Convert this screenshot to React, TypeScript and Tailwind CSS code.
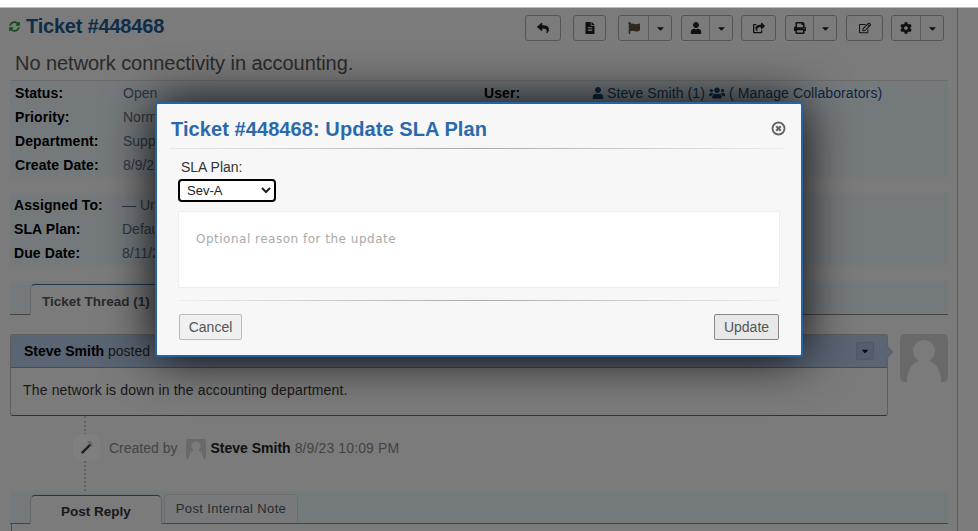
import {
  FaCaretDown,
  FaCog,
  FaFileAlt,
  FaFlag,
  FaPrint,
  FaRegEdit,
  FaReply,
  FaShareSquare,
  FaSyncAlt,
  FaUser,
  FaUsers,
} from 'react-icons/fa';
import type { ReactNode } from 'react';

const Avatar = ({ className }: { className: string }) => (
  <svg viewBox="0 0 48 48" className={className}>
    <rect width="48" height="48" rx="5" fill="#d2d2d2" />
    <circle cx="24" cy="17" r="11" fill="#f6f6f6" />
    <path d="M7 48c0-14 6-19 12-21h10c6 2 12 7 12 21z" fill="#f6f6f6" />
  </svg>
);

const ToolButton = ({ className, icon, split }: { className: string; icon: ReactNode; split?: boolean }) => (
  <div className={`flex h-[26px] items-stretch rounded-[3px] border border-[#aaa] text-[#222] ${className}`}>
    <div className="flex flex-1 items-center justify-center text-[12px]">{icon}</div>
    {split && (
      <div className="flex w-[23px] items-center justify-center border-l border-[#bbb] text-[11px]">
        <FaCaretDown />
      </div>
    )}
  </div>
);

const InfoRow = ({ label, value }: { label: string; value: ReactNode }) => (
  <div className="flex h-[24px] items-center">
    <div className="w-[108px] font-bold tracking-[0.1px] text-black">{label}</div>
    <div className="text-[#5a6f8a]">{value}</div>
  </div>
);

const App = () => {
  return (
    <div className="relative h-[531px] w-[978px] overflow-hidden bg-white font-['Liberation_Sans',Arial,sans-serif] text-[14px]">
      <div className="h-[7px] bg-white" />
      <div className="relative h-[524px] border-t border-[#bbb] bg-[#f6f6f6]">
        <div className="flex h-full">
          <div className="w-[958px] border-r border-[#bbb] pl-[10px] pr-[9px]">
            <div className="flex h-[37px] items-start justify-between">
              <div className="-ml-px flex items-center pt-[6px]">
                <FaSyncAlt className="mr-[6px] text-[11px] text-[#1f9a2f]" />
                <span className="text-[20px] font-bold leading-[24px] tracking-[-0.2px] text-[#1c5a92]">Ticket #448468</span>
              </div>
              <div className="mt-[7px] flex pr-[4px]">
                <ToolButton className="w-[36px]" icon={<FaReply />} />
                <ToolButton className="ml-[12px] w-[33px]" icon={<FaFileAlt />} />
                <ToolButton className="ml-[12px] w-[54px]" icon={<FaFlag className="text-[#5c5238]" />} split />
                <ToolButton className="ml-[9px] w-[52px]" icon={<FaUser />} split />
                <ToolButton className="ml-[8px] w-[35px]" icon={<FaShareSquare />} />
                <ToolButton className="ml-[9px] w-[52px]" icon={<FaPrint />} split />
                <ToolButton className="ml-[9px] w-[37px]" icon={<FaRegEdit />} />
                <ToolButton className="ml-[8px] w-[53px]" icon={<FaCog />} split />
              </div>
            </div>

            <div className="flex h-[36px] items-center border-b border-[#d8d8d8] pl-[5px] text-[20px] tracking-[-0.05px] text-[#555]">
              No network connectivity in accounting.
            </div>

            <div className="flex h-[96px] bg-[#e8f2f8] pl-[5px]">
              <div className="w-[469px]">
                <InfoRow label="Status:" value="Open" />
                <InfoRow label="Priority:" value="Normal" />
                <InfoRow label="Department:" value="Support" />
                <InfoRow label="Create Date:" value="8/9/23" />
              </div>
              <div>
                <InfoRow
                  label="User:"
                  value={
                    <span className="flex items-center tracking-[0.1px] text-[#1c4a7e]">
                      <FaUser className="mr-[3px] text-[12px]" />
                      Steve Smith (1)
                      <FaUsers className="mx-[4px] text-[16px]" />
                      ( Manage Collaborators)
                    </span>
                  }
                />
              </div>
            </div>

            <div className="mt-[16px] h-[72px] bg-[#e8f2f8] pl-[4px]">
              <InfoRow label="Assigned To:" value="— Unassigned —" />
              <InfoRow label="SLA Plan:" value="Default" />
              <InfoRow label="Due Date:" value="8/11/23" />
            </div>

            <div className="mt-[16px] flex h-[34px] items-end border-b border-[#888] bg-[#e8f2f8] pl-[20px]">
              <div className="-mb-px flex h-[31px] w-[132px] items-center rounded-t-[5px] border-x border-t border-x-[#ccc] border-t-[#3a6ea8] bg-[#f6f6f6] pl-[11px] pt-[4px] text-[13.5px] font-bold text-[#555]">
                Ticket Thread (1)
              </div>
            </div>

            <div className="mt-[19px] flex gap-[12px]">
              <div className="h-[82px] w-[878px] rounded-[3px] border border-[#bbb] border-b-[#666]">
                <div className="relative flex h-[33px] items-center justify-between border-b border-[#89a] bg-[#b4c8e6] px-[13px]">
                  <span className="text-[#333]">
                    <span className="font-bold text-black">Steve Smith</span> posted
                  </span>
                  <div className="flex h-[18px] w-[18px] items-center justify-center rounded-[2px] border border-[#a0b0c8] bg-[#a9bcd8] text-[10px] text-[#111]">
                    <FaCaretDown />
                  </div>
                  <div className="absolute right-[-5px] top-[13px] h-[8px] w-[8px] rotate-45 bg-[#b4c8e6]" />
                </div>
                <div className="flex h-[47px] items-center pb-[2px] pl-[12px] tracking-[0.16px] text-[#333]">
                  The network is down in the accounting department.
                </div>
              </div>
              <Avatar className="h-[48px] w-[48px]" />
            </div>

            <div className="relative h-[75px]">
              <div className="absolute bottom-0 left-[74px] top-0 border-l-2 border-dotted border-[#c4c4c4]" />
              <div className="relative flex items-center pl-[63px] pt-[18px]">
                <div className="mb-[2px] flex h-[27px] w-[27px] items-center justify-center rounded-[9px] bg-[#ffffff] text-[#444]">
                  <svg viewBox="0 0 16 16" className="h-[15px] w-[15px]">
                    <path d="M3 14L12 5" stroke="currentColor" strokeWidth="2.6" />
                    <path d="M12 1.5v2M14.5 4h-2M10 1.5l.8 1.5M14.5 6.5l-1.5-.8" stroke="#999" strokeWidth="1" />
                  </svg>
                </div>
                <span className="ml-[9px] text-[#888]">Created by</span>
                <Avatar className="ml-[9px] mr-[4px] h-[20px] w-[20px]" />
                <span className="font-bold text-[#222]">Steve Smith</span>
                <span className="ml-[4px] tracking-[0.13px] text-[#888]">8/9/23 10:09 PM</span>
              </div>
            </div>

            <div className="flex h-[33px] items-end border-b border-[#888] bg-[#e8f2f8] pl-[20px]">
              <div className="-mb-px flex h-[29px] w-[132px] items-center justify-center rounded-t-[5px] border-x border-t border-x-[#ccc] border-t-[#3a6ea8] bg-[#f6f6f6] pt-[4px] text-[13.5px] font-bold text-[#333]">
                Post Reply
              </div>
              <div className="ml-[2px] flex h-[29px] w-[134px] items-center justify-center rounded-t-[5px] border border-b-0 border-[#d8d8d8] bg-[#eef2f5] text-[13px] tracking-[0.35px] text-[#555]">
                Post Internal Note
              </div>
            </div>
            <div className="ml-px h-[8px] border-l border-[#999]" />
          </div>
        </div>

        <div className="absolute inset-0 bg-black/50" />

        <div className="absolute left-[155px] top-[94px] h-[255px] w-[648px] rounded-[3px] border-2 border-[#2563a8] bg-[#f7f7f7] shadow-[0_0_50px_rgba(0,0,0,0.95)]">
          <div className="flex h-[44px] items-start justify-between pl-[14px] pr-[15px] pt-[13px]">
            <span className="text-[20px] font-bold leading-[24px] tracking-[0.08px] text-[#2a69ac]">Ticket #448468: Update SLA Plan</span>
            <svg viewBox="0 0 16 16" className="mt-[4px] h-[15px] w-[15px] text-[#666]">
              <circle cx="8" cy="8" r="6.4" fill="none" stroke="currentColor" strokeWidth="2" />
              <path d="M5.6 5.6l4.8 4.8M10.4 5.6l-4.8 4.8" stroke="currentColor" strokeWidth="2.4" />
            </svg>
          </div>
          <div className="ml-[13px] mr-[16px] h-px bg-gradient-to-r from-[#e8e8e8] via-[#aaa] to-[#eee]" />
          <div className="pl-[24px] pt-[9px] text-[14px] leading-[18px] text-[#333]">SLA Plan:</div>
          <div className="pl-[21px] pt-[3px]">
            <select className="h-[23px] w-[98px] rounded-[4px] border-2 border-black bg-white pl-[3px] font-['Liberation_Sans',Arial,sans-serif] text-[13px] text-[#222]">
              <option>Sev-A</option>
            </select>
          </div>
          <div className="ml-[21px] mt-[9px] h-[77px] w-[602px] rounded-[2px] border border-[#eee] bg-white pl-[17px] pt-[18px] font-['DejaVu_Sans',sans-serif] text-[12px] leading-[18px] tracking-[0.5px] text-[#aaa]">
            Optional reason for the update
          </div>
          <div className="ml-[21px] mr-[22px] mt-[12px] h-px bg-gradient-to-r from-[#eee] via-[#aaa] to-[#eee]" />
          <div className="flex justify-between px-[22px] pt-[13px]">
            <div className="flex h-[26px] w-[63px] items-center justify-center rounded-[2px] border border-[#bbb] bg-[#f0f0f0] text-[#555]">
              Cancel
            </div>
            <div className="flex h-[26px] w-[65px] items-center justify-center rounded-[2px] border border-[#888] bg-[#e8e8e8] text-[#555]">
              Update
            </div>
          </div>
        </div>
      </div>
    </div>
  );
};

export default App;
